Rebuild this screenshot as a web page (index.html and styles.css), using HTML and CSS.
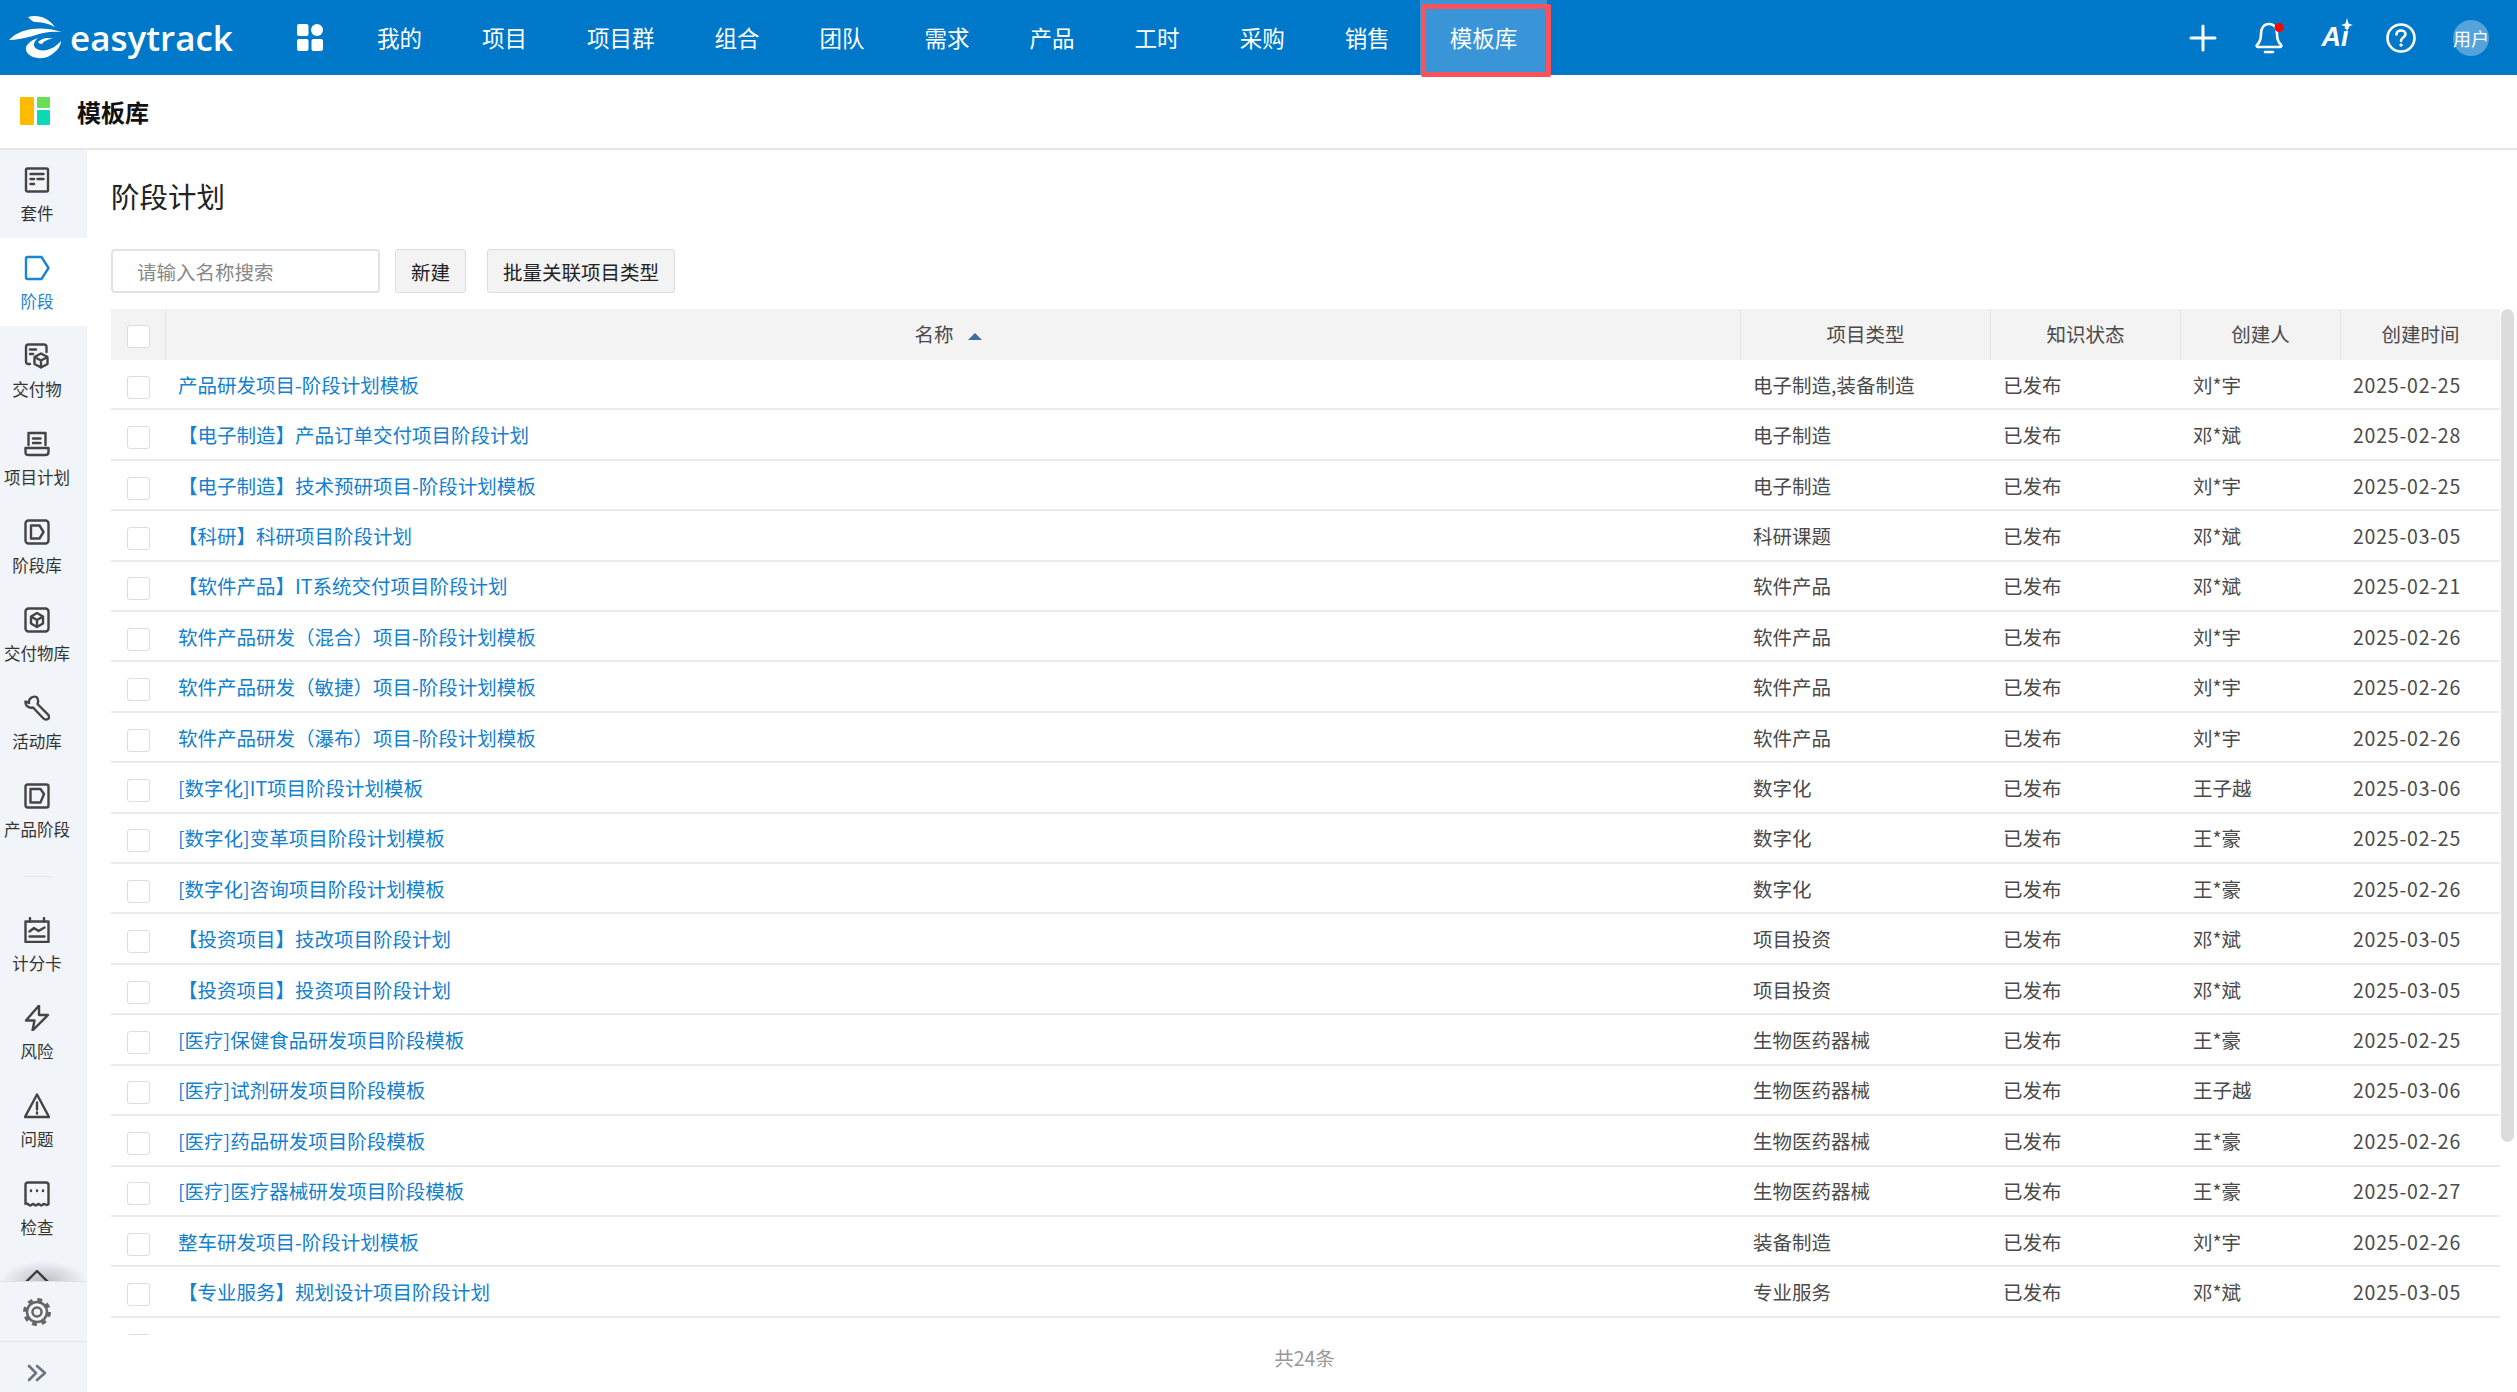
FILE: index.html
```html
<!DOCTYPE html>
<html lang="zh-CN">
<head>
  <meta charset="UTF-8">
  <title>模板库</title>
  <link rel="stylesheet" href="styles.css">
</head>
<body>
  <!-- top bar -->
  <header class="topbar">
    <div class="logo">
      <svg class="logo-mark" width="56" height="46" viewBox="6 15 56 46" fill="#fff">
        <path d="M27 17C36 14 47 17 54 27C47 23 39 22 33 22C31 21 29 19 27 17Z"/>
        <path d="M8 40C18 29 38 25 61 32C49 31 40 33 32 36C24 38 15 40 8 40Z"/>
        <path d="M37 38C28 41 24 46 25 50C27 58 41 61 50 55C56 51 60 46 60 41C55 47 46 52 38 50C32 48 31 43 37 38Z"/>
        <path d="M37 42C41 38 47 37 52 39C47 39 43 41 41 44C39 44 38 43 37 42Z"/>
      </svg>
      <span class="logo-text">easytrack</span>
    </div>
    <svg class="apps" width="26" height="27" viewBox="0 0 26 27" fill="#fff">
      <rect x="0" y="0" width="11.5" height="12" rx="2"/>
      <circle cx="20" cy="6" r="6"/>
      <rect x="0" y="15" width="11.5" height="12" rx="2"/>
      <rect x="14.5" y="15" width="11.5" height="12" rx="2"/>
    </svg>
    <nav class="nav">
      <a class="nav-item">我的</a>
      <a class="nav-item">项目</a>
      <a class="nav-item">项目群</a>
      <a class="nav-item">组合</a>
      <a class="nav-item">团队</a>
      <a class="nav-item">需求</a>
      <a class="nav-item">产品</a>
      <a class="nav-item">工时</a>
      <a class="nav-item">采购</a>
      <a class="nav-item">销售</a>
      <a class="nav-item active">模板库</a>
    </nav>
    <div class="top-actions">
      <div class="action">
        <svg width="28" height="28" viewBox="0 0 28 28" stroke="#fff" stroke-width="3" stroke-linecap="round"><path d="M14 2V26M2 14H26"/></svg>
      </div>
      <div class="action">
        <svg width="30" height="32" viewBox="0 0 30 32" fill="none" stroke="#fff" stroke-width="2.6" stroke-linecap="round" stroke-linejoin="round">
          <path d="M3 23C6 20 7 17 7 12C7 6 10 2 15 2C20 2 23 6 23 12C23 17 24 20 27 23C28 24 27 25 26 25H4C3 25 2 24 3 23Z"/>
          <path d="M11 30H19"/>
          <circle cx="25" cy="5.5" r="4.5" fill="#f00" stroke="none"/>
        </svg>
      </div>
      <div class="action ai">
        <span class="ai-text">Ai</span>
        <svg class="ai-star" width="12" height="14" viewBox="0 0 10 12" fill="#fff"><path d="M5 0L6.300 4.700L10 6L6.300 7.300L5 12L3.700 7.300L0 6L3.700 4.700Z"/></svg>
      </div>
      <div class="action">
        <svg width="30" height="30" viewBox="0 0 30 30" fill="none" stroke="#fff" stroke-width="2.6" stroke-linecap="round">
          <circle cx="15" cy="15" r="13.5"/>
          <path d="M10.5 11.5C10.5 9 12.5 7.5 15 7.5C17.5 7.5 19.5 9 19.5 11.2C19.5 14 15 14.5 15 18"/>
          <circle cx="15" cy="22" r="1.2" fill="#fff" stroke-width="1"/>
        </svg>
      </div>
      <div class="action action-user">
        <div class="avatar"><span>用户</span></div>
      </div>
    </div>
  </header>

  <div class="subheader">
    <svg width="30" height="28" viewBox="0 0 30 28">
      <rect x="0" y="0" width="14" height="28" rx="1" fill="#ffbb00"/>
      <rect x="17" y="0" width="13" height="11" rx="1" fill="#6ade55"/>
      <rect x="17" y="13" width="13" height="15" rx="1" fill="#0bd9b8"/>
    </svg>
    <span class="subheader-title">模板库</span>
  </div>

  <div class="layout">
    <aside class="sidebar">
      <div class="side-list">
        <div class="side-item">
          <svg class="side-icon" viewBox="0 0 26 26"><rect x="2" y="1.5" width="22" height="23" rx="1.5"/><path d="M6.5 7H19.5M6.5 12H10M13.5 12H19.5M6.5 17H10"/></svg>
          <span>套件</span>
        </div>
        <div class="side-item active">
          <svg class="side-icon" viewBox="0 0 26 26"><path d="M3.5 2H17.5L24.5 13L17.5 24H3.5C2.5 24 2 23.500 2 22.500V3.500C2 2.500 2.500 2 3.500 2Z"/></svg>
          <span>阶段</span>
        </div>
        <div class="side-item">
          <svg class="side-icon" viewBox="0 0 26 26"><path d="M6 21H4.500C3 21 2 20 2 18.500V4C2 2.500 3 1.500 4.500 1.500H20C21.500 1.500 22.500 2.500 22.500 4V9"/><path d="M6 6.500H12M6 11H9"/><path d="M17 10.500L23.500 14V21L17 24.500L10.500 21V14ZM10.500 14L17 17.500L23.500 14M17 17.500V24.500"/></svg>
          <span>交付物</span>
        </div>
        <div class="side-item">
          <svg class="side-icon" viewBox="0 0 26 26"><path d="M4.500 14V2H21.500V14"/><path d="M9 7.500H16.500M9 12H16.500"/><path d="M1.500 17H24.500V21C24.500 23 23.500 24 21.500 24H4.500C2.500 24 1.500 23 1.500 21Z"/></svg>
          <span>项目计划</span>
        </div>
        <div class="side-item">
          <svg class="side-icon" viewBox="0 0 26 26"><rect x="1.500" y="1.500" width="23" height="23" rx="3"/><path d="M7 6.500H15.500L19.500 13L15.500 19.500H7Z"/></svg>
          <span>阶段库</span>
        </div>
        <div class="side-item">
          <svg class="side-icon" viewBox="0 0 26 26"><rect x="1.500" y="1.500" width="23" height="23" rx="3"/><path d="M13 6L19 9.500V16.500L13 20L7 16.500V9.500ZM7 9.500L13 13L19 9.500M13 13V20"/></svg>
          <span>交付物库</span>
        </div>
        <div class="side-item">
          <svg class="side-icon" viewBox="0 0 26 26"><path d="M12.500 2C8.500 .5 4 4 5 8L1.500 6.500C1 11 5 13.500 9 12.500L19.500 23.500C21 25 23.500 24.800 24.500 23.500C25.500 22 25 20.500 23.800 19.300L13.500 9C14.500 6.500 14 3.500 12.500 2Z"/></svg>
          <span>活动库</span>
        </div>
        <div class="side-item">
          <svg class="side-icon" viewBox="0 0 26 26"><rect x="1.500" y="1.500" width="23" height="23" rx="2"/><path d="M6.500 6H16.500L20 11L16.500 19.500H6.500Z"/></svg>
          <span>产品阶段</span>
        </div>
        <div class="side-divider"></div>
        <div class="side-item">
          <svg class="side-icon" viewBox="0 0 26 26"><path d="M1.500 4.500H24.500V25H1.500Z"/><path d="M6 1V4.500M20 1V4.500"/><path d="M5.500 14.500L10 11L14.500 14L20.500 10.500M5.500 19.500H20.500"/></svg>
          <span>计分卡</span>
        </div>
        <div class="side-item">
          <svg class="side-icon" viewBox="0 0 26 26"><path d="M15 .5L2 15.500H10.500L8.500 25.500L24 10H15Z"/></svg>
          <span>风险</span>
        </div>
        <div class="side-item">
          <svg class="side-icon" viewBox="0 0 26 26"><path d="M13 1.500L25 24H1Z"/><path d="M13 9.500V16.500M13 19.500V20.500"/></svg>
          <span>问题</span>
        </div>
        <div class="side-item">
          <svg class="side-icon" viewBox="0 0 26 26"><path d="M1.500 23V4C1.500 2.500 2.500 1.500 4 1.500H22C23.500 1.500 24.500 2.500 24.500 4V23C22.500 26 20.500 21 18.500 24C16.500 26 15 21 13 24C11 26 9.500 21 7.500 24C5.500 26 3.500 21 1.500 23Z"/><path d="M7 9.500V10M13 9.500V10M19 9.500V10"/></svg>
          <span>检查</span>
        </div>
        <div class="side-item">
          <svg class="side-icon" viewBox="0 0 26 26"><path d="M13 2L24 13L13 24L2 13Z"/></svg>
        </div>
      </div>
      <div class="side-foot">
        <div class="side-gear">
          <svg width="30" height="30" viewBox="0 0 30 30" fill="none" stroke="#666">
            <circle cx="15" cy="15" r="11.500" stroke-width="5" stroke-dasharray="4.500 4.530"/>
            <circle cx="15" cy="15" r="10" stroke-width="2.500"/>
            <circle cx="15" cy="15" r="4.500" stroke-width="2.500"/>
          </svg>
        </div>
        <div class="side-toggle">
          <svg width="20" height="18" viewBox="0 0 20 18" fill="none" stroke="#6b7280" stroke-width="2.600" stroke-linecap="round" stroke-linejoin="round"><path d="M2 2L9 9L2 16M10 2L18 9L10 16"/></svg>
        </div>
      </div>
    </aside>

    <main class="main">
      <h1 class="page-title">阶段计划</h1>
      <div class="toolbar">
        <input class="search" type="text" placeholder="请输入名称搜索">
        <button class="btn">新建</button>
        <button class="btn btn-wide">批量关联项目类型</button>
      </div>
      <div class="table-area">
        <div class="table-clip">
          <table class="grid">
            <colgroup>
              <col class="col-check">
              <col>
              <col class="col-type">
              <col class="col-status">
              <col class="col-user">
              <col class="col-date">
            </colgroup>
            <thead>
              <tr>
                <th><span class="check"></span></th>
                <th class="th-name">名称<i class="sort-up"></i></th>
                <th>项目类型</th>
                <th>知识状态</th>
                <th>创建人</th>
                <th>创建时间</th>
              </tr>
            </thead>
            <tbody>
              <tr><td><span class="check"></span></td><td><a class="link">产品研发项目-阶段计划模板</a></td><td>电子制造,装备制造</td><td>已发布</td><td>刘*宇</td><td class="date">2025-02-25</td></tr>
              <tr><td><span class="check"></span></td><td><a class="link">【电子制造】产品订单交付项目阶段计划</a></td><td>电子制造</td><td>已发布</td><td>邓*斌</td><td class="date">2025-02-28</td></tr>
              <tr><td><span class="check"></span></td><td><a class="link">【电子制造】技术预研项目-阶段计划模板</a></td><td>电子制造</td><td>已发布</td><td>刘*宇</td><td class="date">2025-02-25</td></tr>
              <tr><td><span class="check"></span></td><td><a class="link">【科研】科研项目阶段计划</a></td><td>科研课题</td><td>已发布</td><td>邓*斌</td><td class="date">2025-03-05</td></tr>
              <tr><td><span class="check"></span></td><td><a class="link">【软件产品】IT系统交付项目阶段计划</a></td><td>软件产品</td><td>已发布</td><td>邓*斌</td><td class="date">2025-02-21</td></tr>
              <tr><td><span class="check"></span></td><td><a class="link">软件产品研发（混合）项目-阶段计划模板</a></td><td>软件产品</td><td>已发布</td><td>刘*宇</td><td class="date">2025-02-26</td></tr>
              <tr><td><span class="check"></span></td><td><a class="link">软件产品研发（敏捷）项目-阶段计划模板</a></td><td>软件产品</td><td>已发布</td><td>刘*宇</td><td class="date">2025-02-26</td></tr>
              <tr><td><span class="check"></span></td><td><a class="link">软件产品研发（瀑布）项目-阶段计划模板</a></td><td>软件产品</td><td>已发布</td><td>刘*宇</td><td class="date">2025-02-26</td></tr>
              <tr><td><span class="check"></span></td><td><a class="link">[数字化]IT项目阶段计划模板</a></td><td>数字化</td><td>已发布</td><td>王子越</td><td class="date">2025-03-06</td></tr>
              <tr><td><span class="check"></span></td><td><a class="link">[数字化]变革项目阶段计划模板</a></td><td>数字化</td><td>已发布</td><td>王*豪</td><td class="date">2025-02-25</td></tr>
              <tr><td><span class="check"></span></td><td><a class="link">[数字化]咨询项目阶段计划模板</a></td><td>数字化</td><td>已发布</td><td>王*豪</td><td class="date">2025-02-26</td></tr>
              <tr><td><span class="check"></span></td><td><a class="link">【投资项目】技改项目阶段计划</a></td><td>项目投资</td><td>已发布</td><td>邓*斌</td><td class="date">2025-03-05</td></tr>
              <tr><td><span class="check"></span></td><td><a class="link">【投资项目】投资项目阶段计划</a></td><td>项目投资</td><td>已发布</td><td>邓*斌</td><td class="date">2025-03-05</td></tr>
              <tr><td><span class="check"></span></td><td><a class="link">[医疗]保健食品研发项目阶段模板</a></td><td>生物医药器械</td><td>已发布</td><td>王*豪</td><td class="date">2025-02-25</td></tr>
              <tr><td><span class="check"></span></td><td><a class="link">[医疗]试剂研发项目阶段模板</a></td><td>生物医药器械</td><td>已发布</td><td>王子越</td><td class="date">2025-03-06</td></tr>
              <tr><td><span class="check"></span></td><td><a class="link">[医疗]药品研发项目阶段模板</a></td><td>生物医药器械</td><td>已发布</td><td>王*豪</td><td class="date">2025-02-26</td></tr>
              <tr><td><span class="check"></span></td><td><a class="link">[医疗]医疗器械研发项目阶段模板</a></td><td>生物医药器械</td><td>已发布</td><td>王*豪</td><td class="date">2025-02-27</td></tr>
              <tr><td><span class="check"></span></td><td><a class="link">整车研发项目-阶段计划模板</a></td><td>装备制造</td><td>已发布</td><td>刘*宇</td><td class="date">2025-02-26</td></tr>
              <tr><td><span class="check"></span></td><td><a class="link">【专业服务】规划设计项目阶段计划</a></td><td>专业服务</td><td>已发布</td><td>邓*斌</td><td class="date">2025-03-05</td></tr>
              <tr class="row-cut"><td><span class="check"></span></td><td></td><td></td><td></td><td></td><td></td></tr>
            </tbody>
          </table>
        </div>
        <div class="scroll-thumb"></div>
      </div>
      <div class="table-foot">共24条</div>
    </main>
  </div>
</body>
</html>
```

FILE: styles.css
```css
html, body {
  margin: 0;
  padding: 0;
  height: 100%;
  overflow: hidden;
}
body {
  display: flex;
  flex-direction: column;
  font-family: "Noto Sans CJK SC", "Liberation Sans", sans-serif;
  font-size: 19.5px;
  color: #4a4a4a;
  background: #fff;
}

/* top bar */
.topbar {
  display: flex;
  align-items: center;
  height: 75px;
  flex-shrink: 0;
  background: #0078ca;
  color: #fff;
}
.logo {
  display: flex;
  align-items: center;
  width: 297px;
  padding-left: 7px;
  box-sizing: border-box;
}
.logo-text {
  margin-left: 7px;
  font-family: "Open Sans", sans-serif;
  font-size: 35px;
  font-weight: 600;
  line-height: 46px;
}
.apps {
  flex-shrink: 0;
}
.nav {
  display: flex;
  align-self: stretch;
  margin-left: 24px;
}
.nav-item {
  position: relative;
  display: flex;
  align-items: center;
  padding: 0 30px 2px;
  font-size: 22.5px;
}
.nav-item.active {
  background: #3a95d8;
}
.nav-item.active::after {
  content: "";
  position: absolute;
  top: 4px;
  right: -4px;
  bottom: -2px;
  left: 1px;
  border: 5px solid #f9525a;
  border-radius: 2px;
}
.top-actions {
  display: flex;
  align-items: center;
  margin-left: auto;
  padding-right: 12px;
}
.action {
  position: relative;
  display: flex;
  justify-content: center;
  align-items: center;
  width: 66px;
}
.action-user {
  width: 68px;
  margin-left: 3px;
}
.ai-text {
  font-family: "Liberation Sans", sans-serif;
  font-size: 27px;
  font-weight: bold;
  font-style: italic;
  line-height: 27px;
}
.ai-star {
  position: absolute;
  top: -6px;
  right: 15px;
}
.avatar {
  display: flex;
  justify-content: center;
  align-items: center;
  width: 36px;
  height: 36px;
  border-radius: 50%;
  background: rgba(255, 255, 255, 0.33);
  font-size: 18px;
  white-space: nowrap;
}

/* page title row */
.subheader {
  display: flex;
  align-items: center;
  gap: 27px;
  height: 75px;
  flex-shrink: 0;
  padding: 0 0 1px 20px;
  box-sizing: border-box;
  border-bottom: 2px solid #e6e6e6;
}
.subheader-title {
  font-size: 24px;
  font-weight: bold;
  color: #111;
}

.layout {
  display: flex;
  flex: 1;
  min-height: 0;
}

/* left rail */
.sidebar {
  display: flex;
  flex-direction: column;
  width: 87px;
  flex-shrink: 0;
  background: #f1f4f8;
}
.side-list {
  flex: 1;
  min-height: 0;
  overflow: hidden;
}
.side-item {
  display: flex;
  flex-direction: column;
  align-items: center;
  height: 88px;
  padding: 17px 13px 0 0;
  box-sizing: border-box;
  font-size: 16.5px;
  line-height: 24px;
  color: #333;
  white-space: nowrap;
}
.side-item span {
  margin-top: 8px;
}
.side-icon {
  width: 26px;
  height: 26px;
  flex-shrink: 0;
  fill: none;
  stroke: #444;
  stroke-width: 2.4;
  stroke-linecap: round;
  stroke-linejoin: round;
}
.side-item.active {
  background: #fff;
  color: #1a84d6;
}
.side-item.active .side-icon {
  stroke: #1a84d6;
}
.side-divider {
  width: 28px;
  height: 46px;
  margin-left: 24px;
  background: linear-gradient(#e2e5e8, #e2e5e8) center 22px / 100% 1px no-repeat;
}
.side-foot {
  position: relative;
  flex-shrink: 0;
  border-top: 1px solid #dfe2e6;
  background: #f1f4f8;
}
.side-foot::before {
  content: "";
  position: absolute;
  left: 0;
  right: 0;
  top: -21px;
  height: 20px;
  background: radial-gradient(ellipse 50% 100% at 50% 100%, rgba(0, 0, 0, 0.22), rgba(0, 0, 0, 0));
}
.side-gear {
  display: flex;
  justify-content: center;
  align-items: center;
  height: 59px;
  padding-right: 13px;
  border-bottom: 1px solid #dfe2e6;
}
.side-toggle {
  display: flex;
  justify-content: center;
  align-items: center;
  height: 38px;
  padding: 12px 13px 0 0;
}

/* content */
.main {
  flex: 1;
  min-width: 0;
  display: flex;
  flex-direction: column;
  padding: 26px 3px 0 24px;
}
.page-title {
  margin: 0;
  font-size: 28.5px;
  font-weight: normal;
  line-height: 40px;
  color: #222;
}
.toolbar {
  display: flex;
  align-items: center;
  gap: 21px;
  margin-top: 33px;
  height: 44px;
}
.search {
  width: 269px;
  height: 44px;
  padding: 0 24px;
  box-sizing: border-box;
  border: 2px solid #e2e2e2;
  border-radius: 4px;
  outline: none;
  font-family: inherit;
  font-size: 19.5px;
  margin-right: -6px;
}
.search::placeholder {
  color: #888;
}
.btn {
  width: 71px;
  height: 44px;
  padding: 0;
  border: 1px solid #dcdcdc;
  border-radius: 3px;
  background: #f3f3f3;
  font-family: inherit;
  font-size: 19.5px;
  color: #222;
}
.btn-wide {
  width: 188px;
}

.table-area {
  display: flex;
  align-items: flex-start;
  margin-top: 16px;
}
.table-clip {
  flex: 1;
  min-width: 0;
  height: 1026px;
  overflow: hidden;
}
.grid {
  width: 100%;
  table-layout: fixed;
  border-collapse: separate;
  border-spacing: 0;
}
.col-check { width: 54px; }
.col-type { width: 250px; }
.col-status { width: 190px; }
.col-user { width: 160px; }
.col-date { width: 160px; }
.grid th {
  height: 51px;
  padding: 0 0 3px;
  box-sizing: border-box;
  background: #f3f3f3;
  border-left: 1px solid #e6e6e6;
  font-weight: normal;
  text-align: center;
}
.grid th:first-child {
  border-left: none;
}
.grid .th-name {
  padding-right: 10px;
}
.grid td {
  height: 50.42px;
  padding: 0 0 0 13px;
  box-sizing: border-box;
  border-bottom: 2px solid #ebebeb;
  white-space: nowrap;
  overflow: hidden;
}
.grid td:first-child {
  padding: 0;
  text-align: center;
}
.check {
  display: inline-block;
  width: 23px;
  height: 23px;
  box-sizing: border-box;
  border: 1px solid #dcdcdc;
  border-radius: 3px;
  background: #fff;
  vertical-align: middle;
}
.link {
  color: #1380d0;
}
.date {
  letter-spacing: 0.8px;
}
.sort-up {
  display: inline-block;
  width: 0;
  height: 0;
  margin-left: 14px;
  border-left: 7px solid transparent;
  border-right: 7px solid transparent;
  border-bottom: 7px solid #3f6f9f;
  vertical-align: 2px;
}
.scroll-thumb {
  width: 13px;
  height: 833px;
  margin-left: 1px;
  border-radius: 7px;
  background: #dcdcdc;
  flex-shrink: 0;
}
.table-foot {
  margin-right: 16px;
  padding-top: 10px;
  text-align: center;
  line-height: 26px;
  color: #999;
}
```
